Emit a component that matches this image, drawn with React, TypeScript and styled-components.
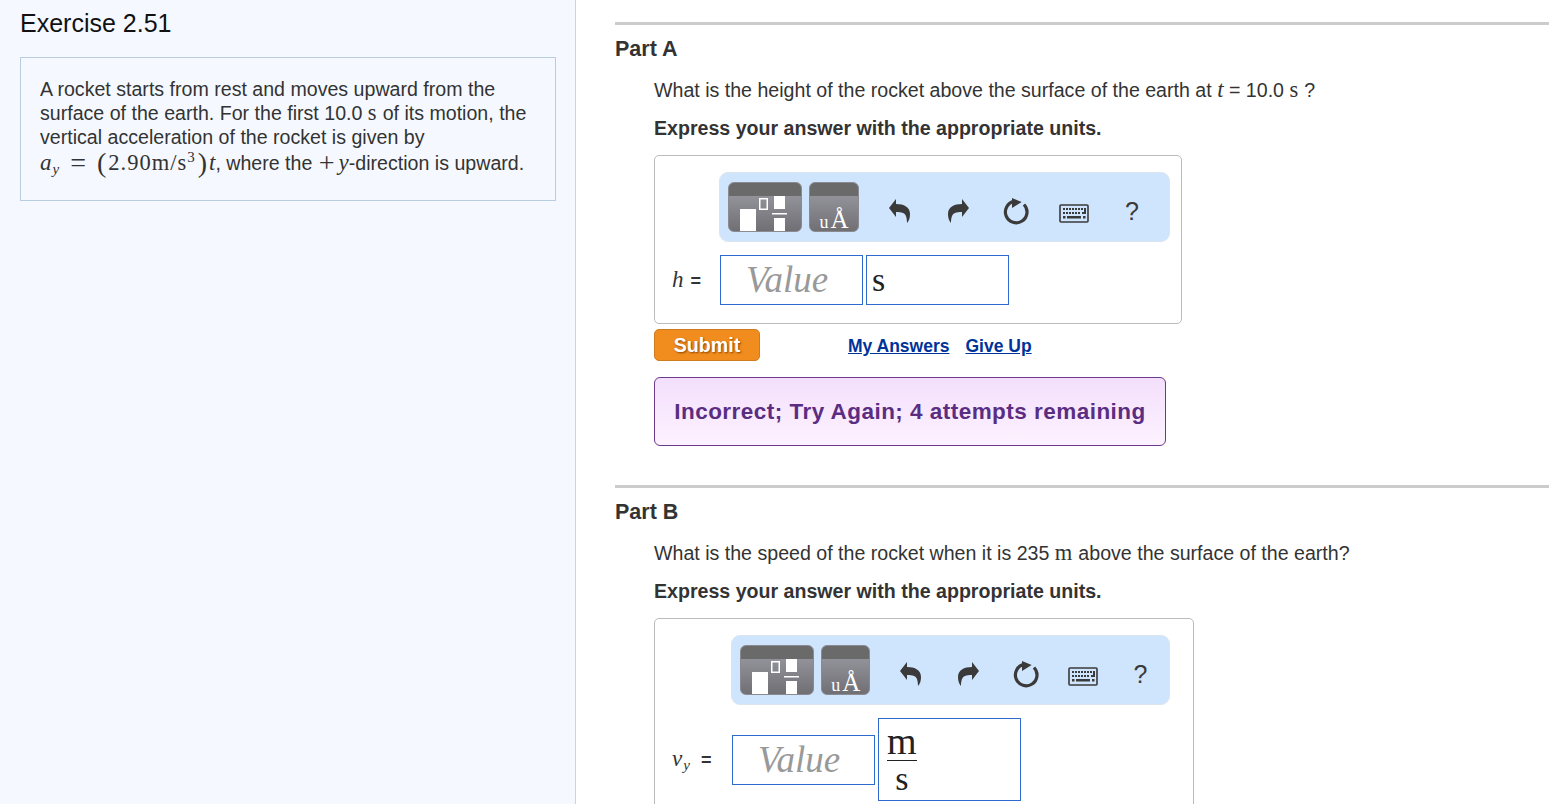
import React, { ReactElement } from 'react'
import styled, { createGlobalStyle } from 'styled-components'

const GlobalStyle = createGlobalStyle`
    html, body {
        margin: 0;
        height: 804px;
        overflow: hidden;
        background: #fff;
        color: #333;
        font-family: "Liberation Sans", Arial, sans-serif;
    }
`
const Page = styled.div`
    display: flex;
    height: 804px;
    overflow: hidden;
`
const Sidebar = styled.aside`
    box-sizing: border-box;
    flex: 0 0 576px;
    padding: 9px 19px 0 20px;
    background: #f5f9ff;
    border-right: 1px solid #d2d2d2;
`
const ExerciseTitle = styled.h1`
    margin: 0 0 20px;
    font-size: 25px;
    line-height: 28px;
    font-weight: 400;
    color: #111;
`
const ProblemBox = styled.div`
    padding: 19px 19px 23px;
    border: 1px solid #b8cde0;
    font-size: 19.6px;
    line-height: 24px;
    white-space: nowrap;
`
const MathLine = styled.div`
    display: flex;
    align-items: baseline;
    height: 26px;
    padding-top: 2px;
`
const Main = styled.main`
    flex: 1;
    padding: 22px 0 0 39px;
    min-width: 0;
`
const Part = styled.section`
    margin-bottom: 39px;
    border-top: 3px solid #ccc;
`
const PartTitle = styled.h2`
    margin: 12px 0 0;
    font-size: 21.5px;
    line-height: 24px;
    font-weight: 700;
`
const PartBody = styled.div`
    padding-left: 39px;
    font-size: 19.6px;
    line-height: 24px;
`
const Question = styled.p`
    margin: 17px 0 0;
`
const Hint = styled.p`
    margin: 14px 0 0;
    font-weight: 700;
`
const Mi = styled.i`
    font-family: "Liberation Serif", serif;
    font-size: 23px;
`
const Mn = styled.span<{ $spread?: boolean }>`
    font-family: "Liberation Serif", serif;
    font-size: 22.5px;
    letter-spacing: ${p => (p.$spread ? 1 : 0.6)}px;
`
const MathOp = styled.span<{ $left: number; $right: number }>`
    margin: 0 ${p => p.$right}px 0 ${p => p.$left}px;
    font-family: "Liberation Serif", serif;
    font-size: 28px;
    line-height: 0;
    vertical-align: -2px;
`
const Paren = styled.span`
    margin: 0 2px;
    font-family: "Liberation Serif", serif;
    font-size: 28px;
    line-height: 0;
    vertical-align: -2px;
`
const Sub = styled.sub`
    margin-left: 1px;
    font-size: 15px;
    line-height: 0;
    vertical-align: -4px;
`
const Sup = styled.sup`
    font-size: 15px;
    line-height: 0;
    vertical-align: 8px;
`
const AnswerBox = styled.div<{ $width: number }>`
    box-sizing: border-box;
    width: ${p => p.$width}px;
    margin-top: 15px;
    padding: 16px 0 18px 17px;
    border: 1px solid #bbb;
    border-radius: 5px;
    background: #fff;
`
const Toolbar = styled.div<{ $offset: number; $width: number }>`
    box-sizing: border-box;
    display: flex;
    align-items: flex-start;
    width: ${p => p.$width}px;
    height: 70px;
    margin-left: ${p => p.$offset}px;
    padding: 9px 0 0 8px;
    background: #cfe5fe;
    border: 1px solid #dbe5ef;
    border-radius: 9px;
`
const PaletteButton = styled.div<{ $width: number }>`
    position: relative;
    box-sizing: border-box;
    display: flex;
    justify-content: center;
    align-items: flex-end;
    width: ${p => p.$width}px;
    height: 50px;
    margin-right: 7px;
    border-radius: 6px;
    border: 1px solid #8a8a90;
    background: linear-gradient(#a09fa8 0, #6f6f74 100%);
    &::before {
        content: '';
        position: absolute;
        left: 0;
        right: 0;
        top: 0;
        height: 13px;
        border-radius: 5px 5px 0 0;
        background: #6a6a6a;
    }
`
const UnitGlyphs = styled.span`
    position: relative;
    margin-bottom: -4px;
    color: #fff;
    font-family: "Liberation Serif", serif;
    line-height: 26px;
    white-space: nowrap;
`
const SmallMicro = styled.span`
    margin-right: 2px;
    font-size: 18px;
`
const BigAngstrom = styled.span`
    font-size: 25px;
`
const ToolButton = styled.div`
    display: flex;
    justify-content: center;
    align-items: center;
    width: 58px;
    height: 58px;
    color: #3a3a3a;
`
const ToolSpacer = styled.div`
    width: 5px;
`
const HelpMark = styled.span`
    font-size: 25px;
`
const KeyboardSvg = styled.svg`
    margin-top: 5px;
`
const InputRow = styled.div`
    display: flex;
    align-items: center;
    margin-top: 13px;
`
const Label = styled.div<{ $width: number; $gap: number }>`
    display: flex;
    align-items: baseline;
    gap: ${p => p.$gap}px;
    width: ${p => p.$width}px;
    font-size: 18px;
    font-weight: 700;
    white-space: nowrap;
`
const LabelVar = styled.i`
    font-family: "Liberation Serif", serif;
    font-size: 23px;
    font-weight: 400;
`
const ValueField = styled.div`
    box-sizing: border-box;
    display: flex;
    align-items: center;
    width: 143px;
    height: 50px;
    padding-left: 25px;
    border: 1px solid #2f6bcf;
    color: #999;
    font-family: "Liberation Serif", serif;
    font-style: italic;
    font-size: 37px;
    background: #fff;
`
const UnitField = styled.div<{ $tall?: boolean }>`
    box-sizing: border-box;
    display: flex;
    align-items: center;
    width: 143px;
    height: ${p => (p.$tall ? 83 : 50)}px;
    margin-left: 3px;
    padding-left: ${p => (p.$tall ? 8 : 5)}px;
    border: 1px solid #2f6bcf;
    color: #222;
    font-family: "Liberation Serif", serif;
    font-size: 34px;
    background: #fff;
`
const Fraction = styled.div`
    display: flex;
    flex-direction: column;
    align-items: center;
    line-height: 36px;
`
const Numerator = styled.span`
    padding-bottom: 1px;
    border-bottom: 1px solid #222;
    font-size: 38px;
`
const ActionRow = styled.div`
    display: flex;
    align-items: center;
    margin-top: 5px;
`
const SubmitButton = styled.button`
    box-sizing: border-box;
    width: 106px;
    height: 32px;
    padding: 0;
    margin-right: 88px;
    border: 1px solid #cf7c20;
    border-radius: 5px;
    background: #f18c1e;
    color: #fff;
    font: 700 19.6px "Liberation Sans", Arial, sans-serif;
    text-shadow: 1px 1px 2px #8a4500;
`
const ActionLink = styled.a`
    margin-right: 16px;
    padding-top: 2px;
    color: #003399;
    font-size: 17.5px;
    font-weight: 700;
    text-decoration: underline;
`
const Feedback = styled.div`
    box-sizing: border-box;
    display: flex;
    justify-content: center;
    align-items: center;
    width: 512px;
    height: 69px;
    margin-top: 16px;
    border: 1px solid #6b3a8a;
    border-radius: 6px;
    background: linear-gradient(#f3dffc, #fdf2ff);
    color: #5b2d82;
    font-size: 22.5px;
    font-weight: 700;
    letter-spacing: 0.47px;
`

function TemplateIcon(): ReactElement {
    return (
        <svg width="72" height="48" viewBox="0 0 72 48">
            <rect x="11" y="26" width="16" height="22" fill="#fff" />
            <rect x="30.75" y="15.75" width="7.5" height="10.5" fill="none" stroke="#fff" strokeWidth="1.5" />
            <rect x="45" y="12" width="11" height="14" fill="#fff" />
            <rect x="43" y="30" width="15" height="1.5" fill="#fff" />
            <rect x="45" y="35" width="11" height="13" fill="#fff" />
        </svg>
    )
}

function UndoIcon({ flip }: { flip?: boolean }): ReactElement {
    return (
        <svg width="24" height="26" viewBox="0 0 24 26" transform={flip ? 'scale(-1 1)' : undefined}>
            <path d="M1 10 8 1v5c8 0 14 3 14 10 0 4-1 7-3 9 0-5-1-9-4-10-2-1-4-1-7-1v5z" fill="currentColor" />
        </svg>
    )
}

function ResetIcon(): ReactElement {
    return (
        <svg width="28" height="32" viewBox="0 0 28 32">
            <path d="M22 9.5A10.8 10.8 0 1 1 12 6.4" fill="none" stroke="currentColor" strokeWidth="3.2" />
            <path d="M10 3 19.7 7 10 13z" fill="currentColor" />
        </svg>
    )
}

function KeyboardIcon(): ReactElement {
    const topKeys = [4, 7, 10, 13, 16, 19, 22]
    const midKeys = [4, 7, 10, 13, 16, 19]
    return (
        <KeyboardSvg width="30" height="19" viewBox="0 0 30 19">
            <rect x="1" y="1" width="28" height="17" rx="1" fill="none" stroke="currentColor" strokeWidth="1.6" />
            {topKeys.map(x => <rect key={x} x={x} y="4" width="2" height="2" fill="currentColor" />)}
            {midKeys.map(x => <rect key={x} x={x} y="8" width="2" height="2" fill="currentColor" />)}
            <path d="M25 4h2v6h-4V8h2z" fill="currentColor" />
            <rect x="4" y="12" width="2.5" height="2.5" fill="currentColor" />
            <rect x="8" y="12" width="14" height="2.5" fill="currentColor" />
            <rect x="24" y="12" width="2.5" height="2.5" fill="currentColor" />
        </KeyboardSvg>
    )
}

function EditorToolbar({ offset, width }: { offset: number; width: number }): ReactElement {
    return (
        <Toolbar $offset={offset} $width={width}>
            <PaletteButton $width={74}><TemplateIcon /></PaletteButton>
            <PaletteButton $width={50}>
                <UnitGlyphs><SmallMicro>u</SmallMicro><BigAngstrom>Å</BigAngstrom></UnitGlyphs>
            </PaletteButton>
            <ToolSpacer />
            <ToolButton><UndoIcon /></ToolButton>
            <ToolButton><UndoIcon flip /></ToolButton>
            <ToolButton><ResetIcon /></ToolButton>
            <ToolButton><KeyboardIcon /></ToolButton>
            <ToolButton><HelpMark>?</HelpMark></ToolButton>
        </Toolbar>
    )
}

export default function App(): ReactElement {
    return (
        <Page>
            <GlobalStyle />
            <Sidebar>
                <ExerciseTitle>Exercise 2.51</ExerciseTitle>
                <ProblemBox>
                    A rocket starts from rest and moves upward from the<br />
                    surface of the earth. For the first 10.0 <Mn>s</Mn> of its motion, the<br />
                    vertical acceleration of the rocket is given by<br />
                    <MathLine>
                        <span>
                            <Mi>a<Sub>y</Sub></Mi><MathOp $left={11} $right={9}>=</MathOp><Paren>(</Paren><Mn $spread>2.90m/s<Sup>3</Sup></Mn><Paren>)</Paren><Mi>t</Mi>, where the <MathOp $left={1} $right={4}>+</MathOp><Mi>y</Mi>-direction is upward.
                        </span>
                    </MathLine>
                </ProblemBox>
            </Sidebar>
            <Main>
                <Part>
                    <PartTitle>Part A</PartTitle>
                    <PartBody>
                        <Question>
                            What is the height of the rocket above the surface of the earth at <Mi>t</Mi> = 10.0 <Mn>s</Mn> ?
                        </Question>
                        <Hint>Express your answer with the appropriate units.</Hint>
                        <AnswerBox $width={528}>
                            <EditorToolbar offset={47} width={451} />
                            <InputRow>
                                <Label $width={48} $gap={7}><LabelVar>h</LabelVar>=</Label>
                                <ValueField>Value</ValueField>
                                <UnitField>s</UnitField>
                            </InputRow>
                        </AnswerBox>
                        <ActionRow>
                            <SubmitButton>Submit</SubmitButton>
                            <ActionLink href="#">My Answers</ActionLink>
                            <ActionLink href="#">Give Up</ActionLink>
                        </ActionRow>
                        <Feedback>Incorrect; Try Again; 4 attempts remaining</Feedback>
                    </PartBody>
                </Part>
                <Part>
                    <PartTitle>Part B</PartTitle>
                    <PartBody>
                        <Question>
                            What is the speed of the rocket when it is 235 <Mn>m</Mn> above the surface of the earth?
                        </Question>
                        <Hint>Express your answer with the appropriate units.</Hint>
                        <AnswerBox $width={540}>
                            <EditorToolbar offset={59} width={439} />
                            <InputRow>
                                <Label $width={60} $gap={11}><LabelVar>v<Sub>y</Sub></LabelVar>=</Label>
                                <ValueField>Value</ValueField>
                                <UnitField $tall>
                                    <Fraction>
                                        <Numerator>m</Numerator>
                                        <span>s</span>
                                    </Fraction>
                                </UnitField>
                            </InputRow>
                        </AnswerBox>
                    </PartBody>
                </Part>
            </Main>
        </Page>
    )
}
